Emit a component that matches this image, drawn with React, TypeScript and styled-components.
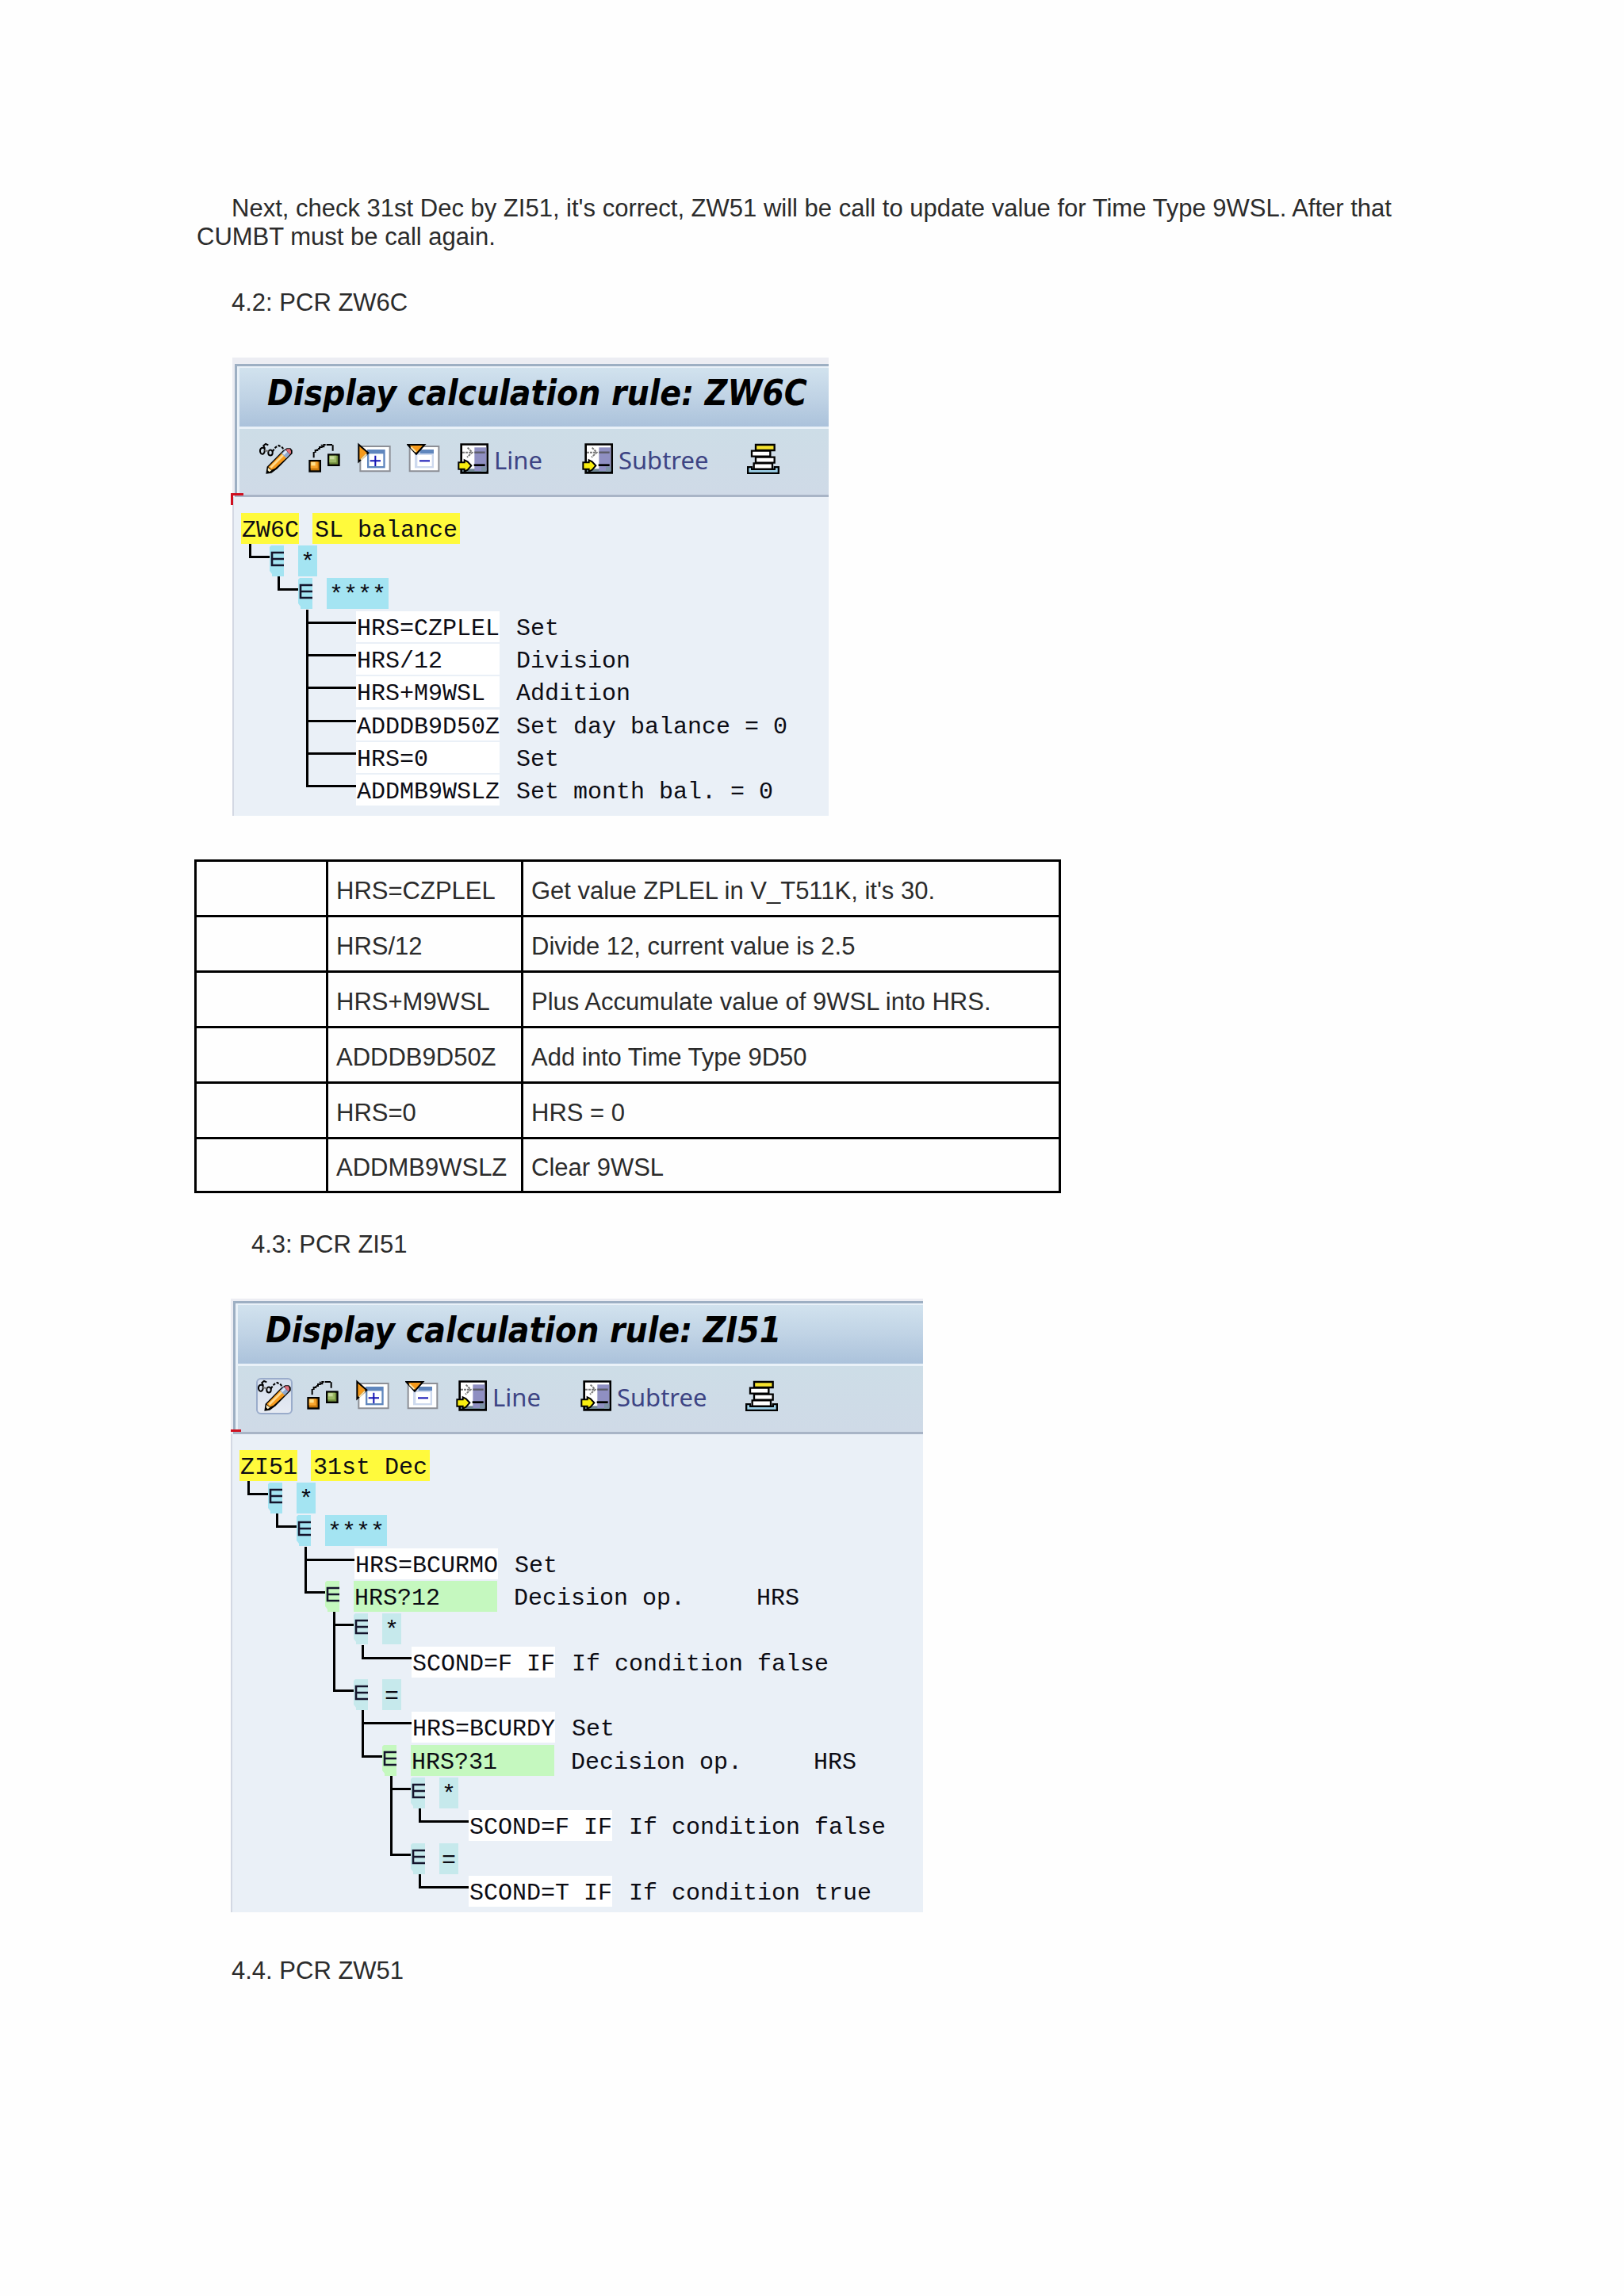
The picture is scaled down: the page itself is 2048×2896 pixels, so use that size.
import React from "react";
import styled, { createGlobalStyle, css } from "styled-components";

const Global = createGlobalStyle`
  *, *::before, *::after { box-sizing: border-box; }
  body { margin: 0; background: #fefefe; }
`;

/* ---------- document ---------- */

const Page = styled.main`
  padding: 245px 280px 360px 248px;
  color: #2b2b2b;
  font-family: "Liberation Sans", Arial, sans-serif;
  font-size: 31px;
  line-height: 36px;
`;

const Paragraph = styled.p`
  margin: 0;
  text-indent: 44px;
`;

const Heading = styled.h2<{ $indent?: number; $top: number }>`
  margin: ${(p) => p.$top}px 0 0 ${(p) => p.$indent ?? 44}px;
  font-size: inherit;
  font-weight: 400;
`;

const RuleTable = styled.table`
  width: 1093px;
  max-width: 100%;
  margin: 55px 0 0 -3px;
  border-collapse: collapse;
  table-layout: fixed;
  tr {
    height: 70px;
  }
  tr:last-child {
    height: 68px;
  }
  td {
    padding: 6px 0 0 10px;
    border: 3px solid #000;
  }
`;

const Col = styled.col<{ $width?: number }>`
  width: ${(p) => (p.$width ? `${p.$width}px` : "auto")};
`;

/* ---------- SAP window ---------- */

const Window = styled.figure<{ $left: number; $top: number; $width: number; $rim: number }>`
  position: relative;
  width: ${(p) => p.$width}px;
  max-width: 100%;
  margin: ${(p) => p.$top}px 0 0 ${(p) => p.$left}px;
  padding-top: ${(p) => p.$rim}px;
  background: #ecedf3;
`;

const Chrome = styled.div`
  margin-left: 3px;
  border-top: 3px solid #9dafc3;
  border-left: 3px solid #9dafc3;
  border-bottom: 3px solid #a8b4c6;
`;

const TitleBar = styled.header`
  display: flex;
  align-items: center;
  height: 79px;
  padding: 0 0 10px 35px;
  border: solid #e9f1f8;
  border-width: 2px 0 3px 3px;
  background: linear-gradient(#d1e2ee, #c0d3e5 50%, #abc2db);
`;

const Title = styled.h3`
  margin: 0;
  color: #000;
  font: italic 700 44px/58px "DejaVu Sans Condensed", "DejaVu Sans", sans-serif;
  white-space: nowrap;
`;

const Toolbar = styled.div`
  display: flex;
  align-items: flex-start;
  gap: 16px;
  height: 83px;
  padding: 15px 0 0 23px;
  border-left: 3px solid #e9f1f8;
  background: linear-gradient(#cddde7, #cfdae7);
`;

const ToolButton = styled.button<{ $active?: boolean; $labelled?: boolean }>`
  display: flex;
  align-items: center;
  gap: 6px;
  height: 46px;
  margin: 0;
  margin-right: ${(p) => (p.$labelled ? 28 : 0)}px;
  padding: 0;
  border: 2px solid transparent;
  border-radius: 6px;
  background: none;
  color: #3d4484;
  font: 400 31px/42px "Noto Sans", sans-serif;
  ${(p) =>
    p.$active &&
    css`
      border-color: #9aaccb;
      background: linear-gradient(#d5dfec, #e6ebf3);
    `}
`;

const ToolLabel = styled.span`
  padding-top: 2px;
`;

const Glyph = styled.svg`
  display: block;
  flex: none;
  width: 42px;
  height: 42px;
`;

const Marker = styled.span<{ $corner?: boolean }>`
  position: absolute;
  left: ${(p) => (p.$corner ? -2 : 0)}px;
  bottom: ${(p) => (p.$corner ? 392 : 606)}px;
  width: ${(p) => (p.$corner ? 16 : 13)}px;
  height: ${(p) => (p.$corner ? 15 : 3)}px;
  border-top: 3px solid #cf1020;
  border-left: ${(p) => (p.$corner ? "3px solid #cf1020" : "0")};
`;

/* ---------- tree ---------- */

const Tree = styled.ul<{ $bottom: number }>`
  margin: 0;
  padding: 18px 0 ${(p) => p.$bottom}px 9px;
  border-left: 2px solid #d3d8e3;
  background: #eaf0f7;
  list-style: none;
  color: #0c0c14;
  font: 400 30px/44px "Liberation Mono", monospace;
  white-space: pre;
`;

const Row = styled.li`
  display: flex;
  height: 41px;
  &:nth-child(3n) {
    height: 42px;
  }
`;

type GuideKind = "blank" | "pipe" | "tee" | "elbow";

const ink = "linear-gradient(#000, #000)";

const Guide = styled.span<{ $kind: GuideKind; $long?: boolean }>`
  flex: none;
  width: ${(p) => (p.$long ? 73 : 36)}px;
  ${(p) =>
    p.$kind === "pipe" &&
    css`
      background: ${ink} 10px 0 / 3px 100% no-repeat;
    `}
  ${(p) =>
    p.$kind === "tee" &&
    css`
      background: ${ink} 10px 0 / 3px 100% no-repeat, ${ink} 10px 15px / 100% 3px no-repeat;
    `}
  ${(p) =>
    p.$kind === "elbow" &&
    css`
      background: ${ink} 10px 0 / 3px 18px no-repeat, ${ink} 10px 15px / 100% 3px no-repeat;
    `}
`;

type Tone = "yellow" | "cyan" | "teal" | "green" | "white";

const tones: Record<Tone, string> = {
  yellow: "#fffa3c",
  cyan: "#a4e4f2",
  teal: "#c6e9ec",
  green: "#c5f8bf",
  white: "#ffffff",
};

const Cell = styled.span<{ $tone: Tone }>`
  flex: none;
  height: 39px;
  margin: 2px 18px 0 0;
  padding: 0 3px;
  background: ${(p) => tones[p.$tone]};
`;

const Code = styled(Cell)`
  width: 181px;
  padding: 0 0 0 1px;
`;

const RuleName = styled(Cell)`
  width: 73px;
  margin-right: 17px;
  padding: 0 0 0 1px;
`;

const Note = styled.span`
  margin-top: 2px;
  padding-left: 3px;
`;

const Toggle = styled.button`
  flex: none;
  width: 18px;
  height: 39px;
  margin: 2px 18px 0 0;
  padding: 0;
  border: 0;
  background: none;
`;

const ToggleArt = styled.svg`
  display: block;
  width: 18px;
  height: 39px;
`;

interface Node {
  guides: string;
  tone: Tone;
  text: string;
  note?: string;
}

/* guides: one letter per level, "." blank, "|" pipe, "+" tee, "L" elbow */
const kinds: Record<string, GuideKind> = { ".": "blank", "|": "pipe", "+": "tee", L: "elbow" };

function TreeRow({ guides, tone, text, note }: Node) {
  const leaf = tone === "white";
  return (
    <Row>
      {guides.split("").map((g, i) => (
        <Guide key={i} $kind={kinds[g]} $long={leaf && i === guides.length - 1} />
      ))}
      {!leaf && (
        <Toggle type="button" aria-label="Collapse node">
          <ToggleArt viewBox="0 0 18 39">
            <path d="M0 2L2 0H18V39H3V36L0 32Z" fill={tones[tone]} />
            <path d="M18 9H3V25H18M3 17H18" fill="none" stroke="#14142c" strokeWidth="2.6" />
          </ToggleArt>
        </Toggle>
      )}
      {note ? <Code $tone={tone}>{text}</Code> : <Cell $tone={tone}>{text}</Cell>}
      {note && <Note>{note}</Note>}
    </Row>
  );
}

/* ---------- toolbar icons ---------- */

const EditIcon = () => (
  <Glyph viewBox="0 0 126 126">
    <g fill="none" stroke="#000" strokeWidth="6">
      <path d="M34 10L24 6L16 12L20 22" />
      <path d="M20 22C8 16 0 26 4 38C8 48 18 46 20 34Z" />
      <path d="M34 34C42 24 52 30 50 42C48 52 36 52 34 42Z" />
      <path d="M20 30L34 34" stroke="#777" />
      <path d="M50 34L62 18L74 12L88 20L92 30" strokeDasharray="10 5" />
    </g>
    <path d="M25 119L29 92L88 32L104 22H118L125 30V42L68 100L46 116Z" fill="#000" />
    <path d="M34 93L86 40L104 58L60 98L46 104Z" fill="#f69a1c" />
    <path d="M40 92L88 44L94 50L46 98Z" fill="#ffd98a" />
    <path d="M84 42L98 28L116 46L102 60Z" fill="#8fa9cf" />
    <path d="M88 42L100 30L106 36L94 48Z" fill="#dfe8f5" />
    <path d="M100 28L106 25H116L120 32V41L115 45Z" fill="#e0707c" />
    <path d="M33 96L46 106L38 112L32 106Z" fill="#fff0c0" />
  </Glyph>
);

const RelationIcon = () => (
  <Glyph viewBox="0 0 126 126">
    <path
      d="M20 58V36H26V30H34V24H42V18H50V8M50 16H58V9H92V35"
      fill="none"
      stroke="#000"
      strokeWidth="6"
      strokeDasharray="22 3"
    />
    <path d="M1 66H48V113H1Z" fill="#000" />
    <path d="M8 73H41V106H8Z" fill="#c8780c" />
    <path d="M8 73H35V98H8Z" fill="#f8a52c" />
    <path d="M10 75H26V88H10Z" fill="#ffe08c" />
    <path d="M72 43H119V90H72Z" fill="#000" />
    <path d="M79 50H112V83H79Z" fill="#6f8c3a" />
    <path d="M79 50H106V76H79Z" fill="#9dba66" />
    <path d="M81 52H98V64H81Z" fill="#c6d99c" />
  </Glyph>
);

const ExpandIcon = () => (
  <Glyph viewBox="0 0 126 126">
    <path d="M10 15H122V109H10Z" fill="#fff" stroke="#8c8f96" strokeWidth="6" />
    <path d="M36 27H104V97H36Z" fill="#5f86bd" />
    <path d="M43 43H97V90H43Z" fill="#fff" />
    <path d="M67 50V90M47 70H87" stroke="#1414b4" strokeWidth="6" />
    <path d="M4 8L40 40L4 73Z" fill="#f59a1b" stroke="#000" strokeWidth="6" />
    <path d="M12 66L34 44" stroke="#ffe9b0" strokeWidth="6" />
  </Glyph>
);

const CollapseIcon = () => (
  <Glyph viewBox="0 0 126 126">
    <path d="M11 15H121V109H11Z" fill="#fff" stroke="#8c8f96" strokeWidth="6" />
    <path d="M30 27H102V97H30Z" fill="#cdd9ee" />
    <path d="M50 27H102V42H50Z" fill="#5f86bd" />
    <path d="M40 48H95V90H40Z" fill="#fff" />
    <path d="M48 70H87" stroke="#1414b4" strokeWidth="6" />
    <path d="M4 9H67L36 44Z" fill="#f59a1b" stroke="#000" strokeWidth="6" />
    <path d="M16 18L34 36" stroke="#ffe9b0" strokeWidth="6" />
  </Glyph>
);

const InsertIcon = () => (
  <Glyph viewBox="0 0 126 126">
    <path d="M16 4H123V119H16Z" fill="#000" />
    <path d="M24 11H115V106H24Z" fill="#fff" />
    <path d="M24 100H115V111H24Z" fill="#6f8794" />
    <path d="M70 19H115V108H70Z" fill="#8f8fc2" />
    <path d="M96 92H115V111H96Z" fill="#7d93a6" />
    <path d="M24 38H60M44 20L62 38L42 56" fill="none" stroke="#777" strokeWidth="6" strokeDasharray="9 3" />
    <path d="M70 38H110" stroke="#5b5b66" strokeWidth="7" />
    <path d="M68 86H110" stroke="#000" strokeWidth="8" />
    <path d="M10 76H32V67L44 73L58 88L44 104L32 110V101H10Z" fill="#f8ee10" stroke="#000" strokeWidth="6" />
  </Glyph>
);

const StackIcon = () => (
  <Glyph viewBox="0 0 126 126">
    <path d="M3 90H24V98H104V90H126V120H3Z" fill="#000" />
    <path d="M10 97H18V105H111V97H119V113H10Z" fill="#9fd2ea" />
    <path d="M36 9H107V30H36Z" fill="#f6e32e" stroke="#000" strokeWidth="7" />
    <path d="M21 32H91V53H21Z" fill="#fff" stroke="#000" strokeWidth="7" />
    <path d="M36 56H107V77H36Z" fill="#fff" stroke="#000" strokeWidth="7" />
    <path d="M29 79H99V101H29Z" fill="#fff" stroke="#000" strokeWidth="7" />
  </Glyph>
);

/* ---------- composed window ---------- */

interface RuleWindowProps {
  title: string;
  name: string;
  text: string;
  nodes: Node[];
  left: number;
  top: number;
  width: number;
  rim: number;
  bottom: number;
  editing?: boolean;
}

function RuleWindow({ title, name, text, nodes, left, top, width, rim, bottom, editing }: RuleWindowProps) {
  return (
    <Window $left={left} $top={top} $width={width} $rim={rim}>
      <Chrome>
        <TitleBar>
          <Title>{title}</Title>
        </TitleBar>
        <Toolbar>
          <ToolButton type="button" aria-label="Display or change" $active={editing}>
            <EditIcon />
          </ToolButton>
          <ToolButton type="button" aria-label="Relations">
            <RelationIcon />
          </ToolButton>
          <ToolButton type="button" aria-label="Expand">
            <ExpandIcon />
          </ToolButton>
          <ToolButton type="button" aria-label="Collapse">
            <CollapseIcon />
          </ToolButton>
          <ToolButton type="button" $labelled>
            <InsertIcon />
            <ToolLabel>Line</ToolLabel>
          </ToolButton>
          <ToolButton type="button" $labelled>
            <InsertIcon />
            <ToolLabel>Subtree</ToolLabel>
          </ToolButton>
          <ToolButton type="button" aria-label="Stack">
            <StackIcon />
          </ToolButton>
        </Toolbar>
      </Chrome>
      <Tree $bottom={bottom}>
        <Row>
          <RuleName $tone="yellow">{name}</RuleName>
          <Cell $tone="yellow">{text}</Cell>
        </Row>
        {nodes.map((n, i) => (
          <TreeRow key={i} {...n} />
        ))}
      </Tree>
      <Marker $corner={!editing} />
    </Window>
  );
}

const zw6c: Node[] = [
  { guides: "L", tone: "cyan", text: "*" },
  { guides: ".L", tone: "cyan", text: "****" },
  { guides: "..+", tone: "white", text: "HRS=CZPLEL", note: "Set" },
  { guides: "..+", tone: "white", text: "HRS/12", note: "Division" },
  { guides: "..+", tone: "white", text: "HRS+M9WSL", note: "Addition" },
  { guides: "..+", tone: "white", text: "ADDDB9D50Z", note: "Set day balance = 0" },
  { guides: "..+", tone: "white", text: "HRS=0", note: "Set" },
  { guides: "..L", tone: "white", text: "ADDMB9WSLZ", note: "Set month bal. = 0" },
];

const zi51: Node[] = [
  { guides: "L", tone: "cyan", text: "*" },
  { guides: ".L", tone: "cyan", text: "****" },
  { guides: "..+", tone: "white", text: "HRS=BCURMO", note: "Set" },
  { guides: "..L", tone: "green", text: "HRS?12", note: "Decision op.     HRS" },
  { guides: "...+", tone: "teal", text: "*" },
  { guides: "...|L", tone: "white", text: "SCOND=F IF", note: "If condition false" },
  { guides: "...L", tone: "teal", text: "=" },
  { guides: "....+", tone: "white", text: "HRS=BCURDY", note: "Set" },
  { guides: "....L", tone: "green", text: "HRS?31", note: "Decision op.     HRS" },
  { guides: ".....+", tone: "teal", text: "*" },
  { guides: ".....|L", tone: "white", text: "SCOND=F IF", note: "If condition false" },
  { guides: ".....L", tone: "teal", text: "=" },
  { guides: "......L", tone: "white", text: "SCOND=T IF", note: "If condition true" },
];

const steps = [
  ["HRS=CZPLEL", "Get value ZPLEL in V_T511K, it's 30."],
  ["HRS/12", "Divide 12, current value is 2.5"],
  ["HRS+M9WSL", "Plus Accumulate value of 9WSL into HRS."],
  ["ADDDB9D50Z", "Add into Time Type 9D50"],
  ["HRS=0", "HRS = 0"],
  ["ADDMB9WSLZ", "Clear 9WSL"],
];

export default function App() {
  return (
    <>
      <Global />
      <Page>
        <Paragraph>
          Next, check 31st Dec by ZI51, it's correct, ZW51 will be call to update value for Time Type 9WSL. After that
          CUMBT must be call again.
        </Paragraph>
        <Heading $top={47}>4.2: PCR ZW6C</Heading>
        <RuleWindow
          title="Display calculation rule: ZW6C"
          name="ZW6C"
          text="SL balance"
          nodes={zw6c}
          left={45}
          top={51}
          width={752}
          rim={8}
          bottom={12}
        />
        <RuleTable>
          <colgroup>
            <Col $width={166} />
            <Col $width={246} />
            <Col />
          </colgroup>
          <tbody>
            {steps.map(([code, text]) => (
              <tr key={code}>
                <td />
                <td>{code}</td>
                <td>{text}</td>
              </tr>
            ))}
          </tbody>
        </RuleTable>
        <Heading $top={47} $indent={69}>
          4.3: PCR ZI51
        </Heading>
        <RuleWindow
          title="Display calculation rule: ZI51"
          name="ZI51"
          text="31st Dec"
          nodes={zi51}
          left={43}
          top={50}
          width={873}
          rim={3}
          bottom={7}
          editing
        />
        <Heading $top={56}>4.4. PCR ZW51</Heading>
      </Page>
    </>
  );
}
